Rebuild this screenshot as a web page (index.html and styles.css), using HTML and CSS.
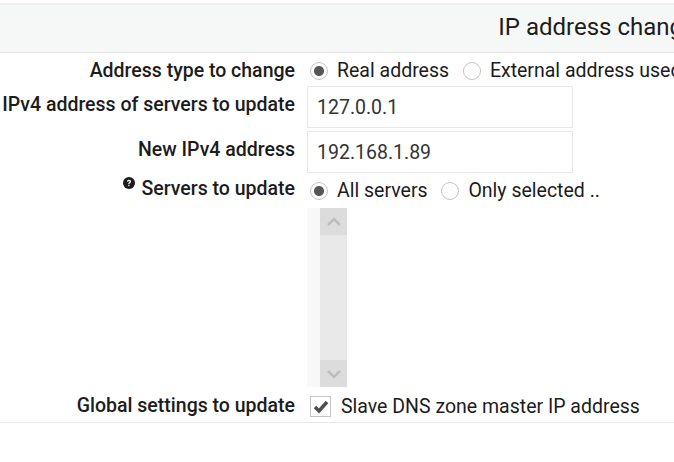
FILE: index.html
```html
<!DOCTYPE html>
<html lang="en">
<head>
    <meta charset="UTF-8">
    <title>IP address change</title>
    <link rel="stylesheet" href="styles.css">
</head>
<body>
    <div class="panel">
        <header class="panel-head">
            <h1>IP address change</h1>
        </header>
        <form class="settings">
            <div class="row row-radio">
                <label class="field-label">Address type to change</label>
                <div class="field">
                    <span class="radio checked"></span><span class="option">Real address</span>
                    <span class="radio"></span><span class="option">External address used</span>
                </div>
            </div>
            <div class="row row-input">
                <label class="field-label">IPv4 address of servers to update</label>
                <div class="field"><input class="text-input" type="text" value="127.0.0.1"></div>
            </div>
            <div class="row row-input">
                <label class="field-label">New IPv4 address</label>
                <div class="field"><input class="text-input" type="text" value="192.168.1.89"></div>
            </div>
            <div class="row row-servers">
                <label class="field-label">
                    <svg class="help" viewBox="0 0 12 12"><circle cx="6" cy="6" r="6" fill="#1c1c1c"/><path d="M3.900 4.600C4 3.400 4.900 2.800 6 2.800c1.200 0 2.100.7 2.100 1.700 0 1.500-1.700 1.400-1.700 2.600H5.200C5.200 5.400 6.700 5.400 6.700 4.600c0-.4-.3-.7-.7-.7-.5 0-.8.3-.9.9z" fill="#fff"/><rect x="5.200" y="7.800" width="1.300" height="1.300" fill="#fff"/></svg>
                    Servers to update
                </label>
                <div class="field">
                    <div class="radio-line">
                        <span class="radio checked"></span><span class="option">All servers</span>
                        <span class="radio"></span><span class="option">Only selected ..</span>
                    </div>
                    <div class="listbox">
                        <div class="scrollbar">
                            <div class="scroll-btn">
                                <svg viewBox="0 0 16 10"><path d="M2 8l6-6 6 6" fill="none" stroke="#bdbdbd" stroke-width="2.500"/></svg>
                            </div>
                            <div class="scroll-btn">
                                <svg viewBox="0 0 16 10"><path d="M2 2l6 6 6-6" fill="none" stroke="#bdbdbd" stroke-width="2.500"/></svg>
                            </div>
                        </div>
                    </div>
                </div>
            </div>
            <div class="row row-check">
                <label class="field-label">Global settings to update</label>
                <div class="field">
                    <span class="checkbox">
                        <svg viewBox="0 0 16 14"><path d="M2 7l4 4 8-9" fill="none" stroke="#4f4f4f" stroke-width="3.500"/></svg>
                    </span>
                    <span class="option">Slave DNS zone master IP address</span>
                </div>
            </div>
        </form>
    </div>
</body>
</html>
```

FILE: styles.css
```css
html,
body {
    margin: 0;
    padding: 0;
    background-color: #fff;
    height: 462px;
    overflow: hidden;
}

body {
    font-family: Roboto, "Liberation Sans", sans-serif;
    color: #1c1c1c;
}

.panel {
    width: 1194px;
    margin-top: 3px;
    border-top: 2px solid #efefef;
    border-bottom: 1px solid #e9e9e9;
}

.panel-head {
    height: 47px;
    background-color: #f6f7f7;
    border-bottom: 1px solid #e6e6e6;
    text-align: center;
}

.panel-head h1 {
    margin: 0;
    font-size: 24px;
    font-weight: 400;
    line-height: 45px;
}

.settings {
    padding-top: 3px;
}

.row {
    display: flex;
}

.field-label {
    width: 295px;
    flex: none;
    text-align: right;
    font-size: 19.500px;
    font-weight: 500;
    line-height: 30px;
    white-space: nowrap;
}

.field {
    margin-left: 12px;
    font-size: 19.500px;
    line-height: 30px;
    white-space: nowrap;
}

.row-radio {
    height: 30px;
}

.row-input {
    height: 45px;
}

.row-input .field-label {
    line-height: 38px;
}

.row-servers {
    height: 215px;
}

.row-servers .field-label {
    line-height: 26px;
}

.radio-line {
    height: 32px;
    line-height: 29px;
}

.radio {
    display: inline-block;
    box-sizing: border-box;
    width: 18px;
    height: 18px;
    margin: 0 9px 0 3px;
    border: 1px solid #c4c4c4;
    border-radius: 50%;
    vertical-align: -3px;
    background-color: #fff;
}

.radio.checked {
    background: radial-gradient(circle, #555 0, #555 4.500px, #fff 5.500px);
}

.option {
    margin-right: 6px;
}

.text-input {
    display: block;
    box-sizing: border-box;
    width: 266px;
    height: 42px;
    padding: 0 9px;
    border: 1px solid #e8e8e8;
    font-family: Roboto, "Liberation Sans", sans-serif;
    font-size: 19.500px;
    color: #333;
    background-color: #fff;
}

.listbox {
    box-sizing: border-box;
    width: 40px;
    height: 179px;
    padding-left: 13px;
    background-color: #f8f8f8;
}

.scrollbar {
    display: flex;
    flex-direction: column;
    justify-content: space-between;
    width: 27px;
    height: 100%;
    background-color: #e9e9e9;
}

.scroll-btn {
    display: flex;
    align-items: center;
    justify-content: center;
    height: 27px;
    background-color: #dcdcdc;
}

.scroll-btn svg {
    width: 16px;
    height: 10px;
}

.row-check .field {
    display: flex;
    align-items: center;
    height: 31px;
}

.checkbox {
    display: flex;
    align-items: center;
    justify-content: center;
    box-sizing: border-box;
    width: 21px;
    height: 21px;
    margin: 0 10px 0 3px;
    border: 1px solid #c4c4c4;
}

.checkbox svg {
    width: 16px;
    height: 14px;
}

.help {
    width: 12px;
    height: 12px;
    margin-right: 2px;
    vertical-align: 6px;
}
```
